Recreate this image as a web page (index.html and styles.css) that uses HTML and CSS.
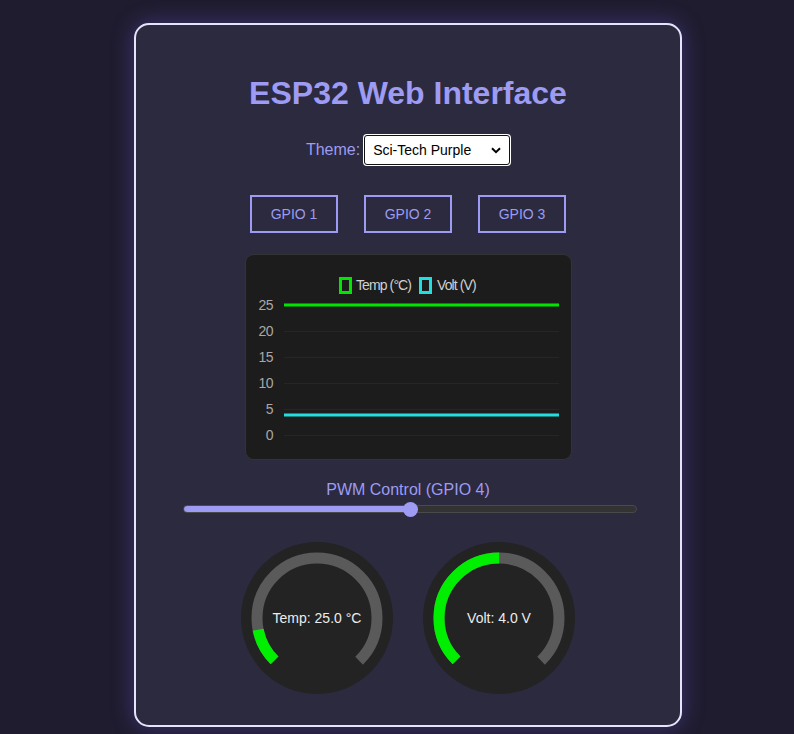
FILE: index.html
```html
<!DOCTYPE html>
<html>
<head>
<meta charset="utf-8">
<link rel="stylesheet" href="styles.css">
</head>
<body>
<div class="card">
  <h1 class="title">ESP32 Web Interface</h1>
  <div class="theme-row">
    <label class="theme-label" for="theme">Theme:</label>
    <div class="select-wrap">
      <select id="theme" class="theme-select">
        <option>Sci-Tech Purple</option>
      </select>
      <svg class="chev" width="10" height="7" viewBox="0 0 10 7"><path d="M1 1.2 L5 5.2 L9 1.2" fill="none" stroke="#000" stroke-width="2"/></svg>
    </div>
  </div>
  <div class="gpio-row">
    <button class="gpio">GPIO 1</button>
    <button class="gpio">GPIO 2</button>
    <button class="gpio">GPIO 3</button>
  </div>
  <div class="chart">
    <svg width="325" height="204" viewBox="0 0 325 204">
      <g stroke="#262626" stroke-width="1">
        <line x1="38" y1="50.5" x2="313" y2="50.5"/>
        <line x1="38" y1="76.5" x2="313" y2="76.5"/>
        <line x1="38" y1="102.5" x2="313" y2="102.5"/>
        <line x1="38" y1="128.5" x2="313" y2="128.5"/>
        <line x1="38" y1="154.5" x2="313" y2="154.5"/>
        <line x1="38" y1="180.5" x2="313" y2="180.5"/>
      </g>
      <g class="ylab" text-anchor="end">
        <text x="27" y="55">25</text>
        <text x="27" y="81">20</text>
        <text x="27" y="107">15</text>
        <text x="27" y="133">10</text>
        <text x="27" y="159">5</text>
        <text x="27" y="185">0</text>
      </g>
      <rect x="94.5" y="23.5" width="10" height="14" fill="#1c1c1c" stroke="#00e600" stroke-width="3"/>
      <text class="legend" x="110" y="35">Temp (°C)</text>
      <rect x="174.5" y="23.5" width="10" height="14" fill="#1c1c1c" stroke="#22dede" stroke-width="3"/>
      <text class="legend" x="191" y="35">Volt (V)</text>
      <line x1="38" y1="50" x2="313" y2="50" stroke="#00e600" stroke-width="3"/>
      <line x1="38" y1="160" x2="313" y2="160" stroke="#22dede" stroke-width="3"/>
    </svg>
  </div>
  <div class="pwm-label">PWM Control (GPIO 4)</div>
  <input class="slider" type="range" min="0" max="100" value="50">
  <div class="gauges">
    <div class="gauge">
      <svg width="152" height="152" viewBox="0 0 152 152">
        <circle cx="76" cy="76" r="76" fill="#232323"/>
        <circle cx="76" cy="76" r="60" fill="none" stroke="#5a5a5a" stroke-width="11" stroke-dasharray="282.74 400" transform="rotate(135 76 76)"/>
        <circle cx="76" cy="76" r="60" fill="none" stroke="#00ee00" stroke-width="11" stroke-dasharray="35.3 400" transform="rotate(135 76 76)"/>
      </svg>
      <div class="gauge-text">Temp: 25.0 °C</div>
    </div>
    <div class="gauge">
      <svg width="152" height="152" viewBox="0 0 152 152">
        <circle cx="76" cy="76" r="76" fill="#232323"/>
        <circle cx="76" cy="76" r="60" fill="none" stroke="#5a5a5a" stroke-width="11" stroke-dasharray="282.74 400" transform="rotate(135 76 76)"/>
        <circle cx="76" cy="76" r="60" fill="none" stroke="#00ee00" stroke-width="11" stroke-dasharray="141.37 400" transform="rotate(135 76 76)"/>
      </svg>
      <div class="gauge-text">Volt: 4.0 V</div>
    </div>
  </div>
</div>
</body>
</html>
```

FILE: styles.css
```css
html, body {
  margin: 0;
  padding: 0;
  background: #1f1c2f;
  height: 100%;
  overflow: hidden;
}
body {
  font-family: "Liberation Sans", Arial, sans-serif;
  padding-top: 23px;
}
.card {
  width: 544px;
  margin-left: 134px;
  box-sizing: content-box;
  border: 2px solid #e6e4fa;
  border-radius: 15px;
  background: #2b2a3e;
  box-shadow: 0 0 22px rgba(120, 100, 240, 0.35);
  padding: 20px 0 31px;
  display: flex;
  flex-direction: column;
  align-items: center;
}
.title {
  margin: 30px 0 0;
  font-size: 32px;
  line-height: 37px;
  font-weight: bold;
  color: #9d9bf3;
}
.theme-row {
  margin: 23px 0 0;
  height: 30px;
  display: flex;
  align-items: center;
}
.theme-label {
  color: #9d9bf3;
  font-size: 16px;
  margin-right: 4px;
}
.select-wrap {
  position: relative;
  width: 146px;
  height: 30px;
}
.theme-select {
  appearance: none;
  -webkit-appearance: none;
  width: 146px;
  height: 30px;
  box-sizing: border-box;
  background: #fff;
  border: 1.5px solid #111;
  box-shadow: 0 0 0 1px #fff;
  border-radius: 3px;
  font-family: "Liberation Sans", Arial, sans-serif;
  font-size: 14px;
  color: #000;
  padding: 0 0 0 8px;
}
.chev {
  position: absolute;
  right: 9px;
  top: 12px;
}
.gpio-row {
  margin: 30px 0 0;
  display: flex;
  gap: 26px;
}
.gpio {
  width: 88px;
  height: 38px;
  box-sizing: border-box;
  background: transparent;
  border: 2px solid #9d9bf3;
  color: #9d9bf3;
  font-family: "Liberation Sans", Arial, sans-serif;
  font-size: 14px;
  padding: 0;
}
.chart {
  margin: 22px 0 0;
  width: 325px;
  height: 204px;
  background: #1c1c1c;
  border-radius: 8px;
  box-shadow: 0 0 0 1px #333;
  overflow: hidden;
}
.chart svg {
  display: block;
}
.ylab text {
  font-family: "Liberation Sans", Arial, sans-serif;
  font-size: 14px;
  fill: #a8a8a8;
  letter-spacing: -0.5px;
}
.legend {
  font-family: "Liberation Sans", Arial, sans-serif;
  font-size: 14px;
  fill: #d0d0d0;
  letter-spacing: -0.9px;
}
.pwm-label {
  margin: 22px 0 0;
  font-size: 16px;
  line-height: 18px;
  color: #9d9bf3;
}
.slider {
  -webkit-appearance: none;
  appearance: none;
  margin: 3px 0 0 4px;
  width: 454px;
  height: 14px;
  background: transparent;
  padding: 0;
}
.slider::-webkit-slider-runnable-track {
  height: 8px;
  border-radius: 4px;
  box-sizing: border-box;
  border: 1px solid #4a4a4a;
  background: linear-gradient(to right, #9d9bf3 0, #9d9bf3 50%, #333 50%, #333 100%);
}
.slider::-webkit-slider-thumb {
  -webkit-appearance: none;
  width: 15px;
  height: 15px;
  border-radius: 50%;
  background: #9d9bf3;
  margin-top: -4.5px;
  border: none;
}
.gauges {
  margin: 26px 0 0;
  display: flex;
  gap: 30px;
}
.gauge {
  position: relative;
  width: 152px;
  height: 152px;
}
.gauge svg {
  display: block;
}
.gauge-text {
  position: absolute;
  left: 0;
  right: 0;
  top: 66px;
  text-align: center;
  font-size: 14px;
  line-height: 20px;
  color: #ececec;
}
```
